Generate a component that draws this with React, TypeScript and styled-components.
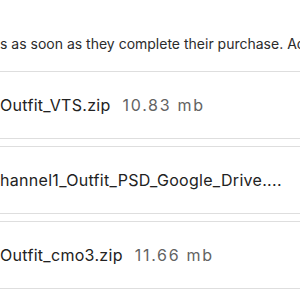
import React from "react";
import styled, { createGlobalStyle } from "styled-components";

const Global = createGlobalStyle`
  html, body { margin: 0; padding: 0; background: #fff; }
  body { width: 300px; height: 300px; overflow: hidden; font-family: "Inter", "Liberation Sans", sans-serif; }
`;

const Page = styled.div`
  width: 300px;
  overflow: hidden;
  padding-top: 34px;
`;

const Description = styled.p`
  margin: 0;
  white-space: nowrap;
  font-size: 14px;
  line-height: 20px;
  color: #2b2b2b;
  padding-bottom: 17px;
  border-bottom: 1px solid #dedede;
`;

const List = styled.div`
  display: flex;
  flex-direction: column;
  gap: 7px;
`;

const FileRow = styled.div<{ $first?: boolean }>`
  height: 66px;
  display: flex;
  align-items: center;
  gap: 12px;
  white-space: nowrap;
  border-top: ${(p) => (p.$first ? "none" : "1px solid #dedede")};
  border-bottom: 1px solid #dedede;
`;

const FileName = styled.span`
  font-size: 16px;
  letter-spacing: 0.3px;
  color: #222;
`;

const FileSize = styled.span`
  font-size: 16px;
  letter-spacing: 1.7px;
  color: #636363;
`;

const files = [
  { name: "Outfit_VTS.zip", size: "10.83 mb" },
  { name: "hannel1_Outfit_PSD_Google_Drive....", size: "" },
  { name: "Outfit_cmo3.zip", size: "11.66 mb" },
];

export default function App() {
  return (
    <Page>
      <Global />
      <Description>
        s as soon as they complete their purchase. Add files
      </Description>
      <List>
        {files.map((f, i) => (
          <FileRow key={f.name} $first={i === 0}>
            <FileName>{f.name}</FileName>
            {f.size && <FileSize>{f.size}</FileSize>}
          </FileRow>
        ))}
      </List>
    </Page>
  );
}
